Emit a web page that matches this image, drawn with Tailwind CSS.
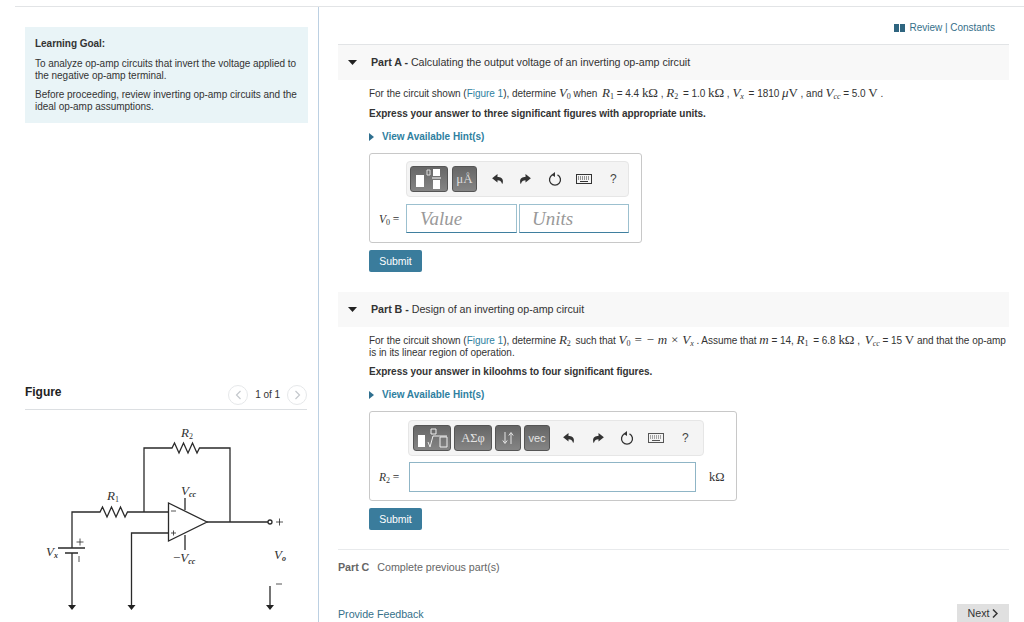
<!DOCTYPE html>
<html lang="en">
<head>
    <meta charset="UTF-8">
    <title>Part A - Inverting op-amp circuit</title>
    <script src="https://cdn.jsdelivr.net/npm/@tailwindcss/browser@4"></script>
</head>
<body class="bg-white h-[622px] overflow-hidden font-['Liberation_Sans',sans-serif] text-[10px] tracking-[-0.03px] leading-[12px] text-[#333]">
    <div class="h-[7px] ml-[15px] border-b border-[#e2e4e6]"></div>
    <div class="flex h-[615px]">
        <!-- left column -->
        <div class="w-[319px] shrink-0 border-r border-[#bcd0e2] flex flex-col">
            <div class="ml-[25px] mr-[10px] mt-[20px] h-[96px] bg-[#e9f4f7] pl-[10px] pr-[8px] pt-[11px]">
                <p class="font-bold">Learning Goal:</p>
                <p class="mt-[8px]">To analyze op-amp circuits that invert the voltage applied to the negative op-amp terminal.</p>
                <p class="mt-[7px]">Before proceeding, review inverting op-amp circuits and the ideal op-amp assumptions.</p>
            </div>
            <div class="ml-[25px] mr-[11px] mt-[260px] h-[27px] border-b border-[#dcdfe2] flex items-start justify-between">
                <span class="font-bold text-[12px] leading-[16px] mt-[1px] text-[#222]">Figure</span>
                <div class="flex items-center gap-[7px] mt-[2px]">
                    <span class="w-[20px] h-[20px] rounded-full border border-[#e6e8ea] flex items-center justify-center">
                        <svg width="7" height="10" viewBox="0 0 7 10"><path d="M5.500 1 1.500 5l4 4" fill="none" stroke="#c4c8cc" stroke-width="1.200"/></svg>
                    </span>
                    <span>1 of 1</span>
                    <span class="w-[20px] h-[20px] rounded-full border border-[#e6e8ea] flex items-center justify-center">
                        <svg width="7" height="10" viewBox="0 0 7 10"><path d="M1.500 1l4 4-4 4" fill="none" stroke="#c4c8cc" stroke-width="1.200"/></svg>
                    </span>
                </div>
            </div>
            <svg class="block" width="318" height="212" viewBox="0 410 318 212" fill="none" stroke="#2a2a2a" stroke-width="1.300">
                <path d="M144 512V448H172l2.500 -5 4.500 10 4.500 -10 4.500 10 4.500 -10 4.500 10 2.500 -5H230V522"/>
                <path d="M72 548V512H100l2.500 -5 4.500 10 4.500 -10 4.500 10 4.500 -10 4.500 10 2.500 -5H168.500"/>
                <path d="M168.500 503V541L207 522Z"/>
                <path d="M207 522H268"/>
                <circle cx="270" cy="522" r="2"/>
                <path d="M185 498V510M185 535V550"/>
                <path d="M168.500 533H131.500V606"/>
                <path d="M58 548H85M65 553H78M72 553V606"/>
                <path d="M270 586V606"/>
                <path d="M68 605H76L72 610ZM127.500 605H135.500L131.500 610ZM266 605H274L270 610Z" fill="#222" stroke="none"/>
                <path d="M276 522H283M279.500 518.500V525.500M76.500 542H83.500M80 538.500V545.500M276 584H282M171 511H176M171 533H176M173.500 530.500V535.500M79 556V562" stroke-width="0.800"/>
                <g font-family="'Liberation Serif',serif" font-style="italic" font-size="13" fill="#333" stroke="none">
                    <text x="181" y="437">R<tspan font-size="8" font-style="normal" dy="2">2</tspan></text>
                    <text x="107" y="500">R<tspan font-size="8" font-style="normal" dy="2">1</tspan></text>
                    <text x="181" y="495">V<tspan font-size="8" font-weight="bold" dy="2">cc</tspan></text>
                    <text x="173" y="562"><tspan font-style="normal">−</tspan>V<tspan font-size="8" font-weight="bold" dy="2">cc</tspan></text>
                    <text x="46" y="556">V<tspan font-size="8" font-weight="bold" dy="2">x</tspan></text>
                    <text x="274" y="559">V<tspan font-size="8" font-weight="bold" dy="2">o</tspan></text>
                </g>
            </svg>
        </div>

        <!-- right column -->
        <div class="flex-1 relative pl-[19px] pr-[15px]">
            <div class="h-[38px] border-b border-[#e2e4e6] flex justify-end items-start pt-[15px] pr-[14px] text-[#35708a]">
                <svg class="mt-[2px] mr-[5px]" width="11" height="8" viewBox="0 0 11 8"><path d="M0 0H5V8H0ZM6 0H11V8H6Z" fill="#2f6580"/></svg>
                <span>Review | Constants</span>
            </div>

            <!-- Part A -->
            <div class="h-[35px] bg-[#f8f8f8] flex items-center pb-[1px] text-[10.700px]">
                <svg class="ml-[10px] mr-[14px]" width="9" height="5" viewBox="0 0 9 5"><path d="M0 0H9L4.500 5Z" fill="#222"/></svg>
                <span><b>Part A -</b> Calculating the output voltage of an inverting op-amp circuit</span>
            </div>
            <div class="ml-[31px]">
                <p class="mt-[7px]">For the circuit shown (<span class="text-[#2f7f9f]">Figure 1</span>), determine <i class="font-['Liberation_Serif',serif] text-[13px]">V<sub class="not-italic text-[8px]">0</sub></i> when <i class="ml-[2px] font-['Liberation_Serif',serif] text-[13px]">R<sub class="not-italic text-[8px]">1</sub></i> = 4.4 <span class="font-['Liberation_Serif',serif] text-[13px]">kΩ</span> , <i class="mr-[2px] font-['Liberation_Serif',serif] text-[13px]">R<sub class="not-italic text-[8px]">2</sub></i> = 1.0 <span class="font-['Liberation_Serif',serif] text-[13px]">kΩ</span> , <i class="mr-[2px] font-['Liberation_Serif',serif] text-[13px]">V<sub class="text-[8px]">x</sub></i> = 1810 <i class="font-['Liberation_Serif',serif] text-[13px]">μ</i><span class="font-['Liberation_Serif',serif] text-[13px]">V</span> , and <i class="font-['Liberation_Serif',serif] text-[13px]">V<sub class="text-[8px]">cc</sub></i> = 5.0 <span class="font-['Liberation_Serif',serif] text-[13px]">V</span> .</p>
                <p class="mt-[8px] font-bold">Express your answer to three significant figures with appropriate units.</p>
                <p class="mt-[11px] font-bold text-[#2f7f9f] flex items-center">
                    <svg class="mr-[8px]" width="5" height="8" viewBox="0 0 5 8"><path d="M0 0 5 4 0 8Z" fill="#2f6f8f"/></svg>View Available Hint(s)
                </p>

                <div class="mt-[10px] w-[273px] h-[90px] border border-[#c8c8c8] rounded-[3px] pl-[36px] pt-[7px]">
                    <div class="w-[223px] h-[36px] bg-[#f4f4f4] border border-[#e6e6e6] rounded-[4px] flex items-center pl-[3px]">
                        <span class="w-[38px] h-[26px] rounded-[3px] bg-linear-to-b from-[#666] to-[#858585] border border-[#555] flex items-center justify-center">
                            <svg width="30" height="20" viewBox="0 0 30 20"><path d="M2 6H10V18H2ZM19 0H26V7H19ZM19 11H26V20H19Z" fill="#fff"/><path d="M13 1H16V6H13Z" fill="none" stroke="#ddd"/><path d="M18 9H27" stroke="#fff"/></svg>
                        </span>
                        <span class="ml-[4px] w-[25px] h-[26px] rounded-[3px] bg-linear-to-b from-[#666] to-[#858585] border border-[#555] flex items-center justify-center font-['Liberation_Serif',serif] text-[13px] text-[#ddd]">μÅ</span>
                        <svg class="ml-[15px]" width="11" height="10" viewBox="0 0 14 13"><path d="M7 0 0 5.500 7 11V8c3 0 5 1 6 5 1-1 1-2 1-4 0-3-3-5-7-5z" fill="#333"/></svg>
                        <svg class="ml-[17px]" width="11" height="10" viewBox="0 0 14 13"><path d="M7 0 14 5.500 7 11V8c-3 0-5 1-6 5-1-1-1-2-1-4 0-3 3-5 7-5z" fill="#333"/></svg>
                        <svg class="ml-[17px]" width="14" height="14" viewBox="0 0 14 14"><path d="M4.500 2.800A5.500 5.500 0 1 0 9.500 2.800" fill="none" stroke="#333" stroke-width="1.300"/><path d="M7 0 3.500 2.700 7 5Z" fill="#333"/></svg>
                        <svg class="ml-[14px]" width="16" height="10" viewBox="0 0 16 10"><rect x="0.500" y="0.500" width="15" height="9" fill="none" stroke="#333"/><path d="M2 3H14M2 5H14" stroke="#333" stroke-dasharray="1 1"/><path d="M4 7.500H12" stroke="#333"/></svg>
                        <span class="ml-[18px] text-[12px] text-[#444]">?</span>
                    </div>
                    <div class="flex items-center mt-[7px] -ml-[27px]">
                        <span class="w-[27px] text-[11.500px] font-['Liberation_Serif',serif]"><i>V</i><sub class="text-[8px]">0</sub> =</span>
                        <span class="w-[111px] h-[29px] border border-[#9cc0cf] border-b-[#3f7f9f] flex items-center pl-[13px] font-['Liberation_Serif',serif] italic text-[19px] text-[#999]">Value</span>
                        <span class="ml-[2px] w-[110px] h-[29px] border border-[#9cc0cf] border-b-[#3f7f9f] flex items-center pl-[12px] font-['Liberation_Serif',serif] italic text-[19px] text-[#999]">Units</span>
                    </div>
                </div>
                <div class="mt-[7px] w-[53px] h-[22px] bg-[#3a7c9c] rounded-[2px] text-[10.500px] text-white flex items-center justify-center">Submit</div>
            </div>

            <!-- Part B -->
            <div class="mt-[20px] h-[35px] bg-[#f8f8f8] flex items-center pb-[1px] text-[10.700px]">
                <svg class="ml-[10px] mr-[14px]" width="9" height="5" viewBox="0 0 9 5"><path d="M0 0H9L4.500 5Z" fill="#222"/></svg>
                <span><b>Part B -</b> Design of an inverting op-amp circuit</span>
            </div>
            <div class="ml-[31px]">
                <p class="mt-[7px]">For the circuit shown (<span class="text-[#2f7f9f]">Figure 1</span>), determine <i class="font-['Liberation_Serif',serif] text-[13px]">R<sub class="not-italic text-[8px]">2</sub></i> <span class="ml-[2px]">such that</span> <i class="font-['Liberation_Serif',serif] text-[13px]">V<sub class="not-italic text-[8px]">0</sub> = − m × V<sub class="text-[8px]">x</sub></i> . Assume that <i class="font-['Liberation_Serif',serif] text-[13px]">m</i> = 14, <i class="mr-[2px] font-['Liberation_Serif',serif] text-[13px]">R<sub class="not-italic text-[8px]">1</sub></i> = 6.8 <span class="font-['Liberation_Serif',serif] text-[13px]">kΩ</span> , <i class="ml-[2px] font-['Liberation_Serif',serif] text-[13px]">V<sub class="text-[8px]">cc</sub></i> = 15 <span class="font-['Liberation_Serif',serif] text-[13px]">V</span> and that the op-amp is in its linear region of operation.</p>
                <p class="mt-[7px] font-bold">Express your answer in kiloohms to four significant figures.</p>
                <p class="mt-[11px] font-bold text-[#2f7f9f] flex items-center">
                    <svg class="mr-[8px]" width="5" height="8" viewBox="0 0 5 8"><path d="M0 0 5 4 0 8Z" fill="#2f6f8f"/></svg>View Available Hint(s)
                </p>

                <div class="mt-[10px] w-[368px] h-[90px] border border-[#c8c8c8] rounded-[3px] pl-[38px] pt-[8px]">
                    <div class="w-[296px] h-[36px] bg-[#f4f4f4] border border-[#e6e6e6] rounded-[4px] flex items-center pl-[4px]">
                        <span class="w-[38px] h-[26px] rounded-[3px] bg-linear-to-b from-[#666] to-[#858585] border border-[#555] flex items-center justify-center">
                            <svg width="32" height="20" viewBox="0 0 32 20"><path d="M2 7H9V19H2Z" fill="#fff"/><path d="M15 1H20V6H15ZM24 9H31V19H24Z" fill="none" stroke="#eee"/><path d="M12 14l2 5 3-11H31" fill="none" stroke="#eee"/></svg>
                        </span>
                        <span class="ml-[3px] w-[38px] h-[26px] rounded-[3px] bg-linear-to-b from-[#666] to-[#858585] border border-[#555] flex items-center justify-center font-['Liberation_Serif',serif] text-[12.500px] text-[#e4e4e4]">ΑΣφ</span>
                        <span class="ml-[3px] w-[26px] h-[26px] rounded-[3px] bg-linear-to-b from-[#666] to-[#858585] border border-[#555] flex items-center justify-center">
                            <svg width="12" height="12" viewBox="0 0 12 12"><path d="M3 0V11M0.800 8.500 3 11.500 5.200 8.500M9 12V1M6.800 3.500 9 0.500 11.200 3.500" fill="none" stroke="#e4e4e4"/></svg>
                        </span>
                        <span class="ml-[3px] w-[26px] h-[26px] rounded-[3px] bg-linear-to-b from-[#666] to-[#858585] border border-[#555] flex items-center justify-center text-[11px] text-[#e4e4e4]">vec</span>
                        <svg class="ml-[13px]" width="11" height="10" viewBox="0 0 14 13"><path d="M7 0 0 5.500 7 11V8c3 0 5 1 6 5 1-1 1-2 1-4 0-3-3-5-7-5z" fill="#333"/></svg>
                        <svg class="ml-[19px]" width="11" height="10" viewBox="0 0 14 13"><path d="M7 0 14 5.500 7 11V8c-3 0-5 1-6 5-1-1-1-2-1-4 0-3 3-5 7-5z" fill="#333"/></svg>
                        <svg class="ml-[16px]" width="14" height="14" viewBox="0 0 14 14"><path d="M4.500 2.800A5.500 5.500 0 1 0 9.500 2.800" fill="none" stroke="#333" stroke-width="1.300"/><path d="M7 0 3.500 2.700 7 5Z" fill="#333"/></svg>
                        <svg class="ml-[14px]" width="16" height="10" viewBox="0 0 16 10"><rect x="0.500" y="0.500" width="15" height="9" fill="none" stroke="#555"/><path d="M2 3H14M2 5H14" stroke="#555" stroke-dasharray="1 1"/><path d="M4 7.500H12" stroke="#555"/></svg>
                        <span class="ml-[18px] text-[12px] text-[#444]">?</span>
                    </div>
                    <div class="flex items-center mt-[6px] -ml-[29px]">
                        <span class="w-[30px] text-[11.500px] font-['Liberation_Serif',serif]"><i>R</i><sub class="text-[8px]">2</sub> =</span>
                        <span class="w-[287px] h-[30px] border border-[#8fb5c6]"></span>
                        <span class="ml-[13px] font-['Liberation_Serif',serif] text-[12.500px]">kΩ</span>
                    </div>
                </div>
                <div class="mt-[7px] w-[53px] h-[22px] bg-[#3a7c9c] rounded-[2px] text-[10.500px] text-white flex items-center justify-center">Submit</div>
            </div>

            <!-- Part C -->
            <div class="mt-[19px] border-t border-[#e8eaec] pt-[11px] text-[10.700px] text-[#666]">
                <b>Part C</b><span class="ml-[8px]">Complete previous part(s)</span>
            </div>

            <div class="mt-[31px] flex justify-between items-start text-[10.700px]">
                <span class="mt-[4px] text-[#35708a]">Provide Feedback</span>
                <span class="w-[52px] h-[18px] bg-[#e0e0e0] flex items-center justify-center gap-[3px]">Next
                    <svg width="6" height="9" viewBox="0 0 6 9"><path d="M1 0.500 5 4.500 1 8.500" fill="none" stroke="#333" stroke-width="1.500"/></svg>
                </span>
            </div>
        </div>
    </div>
</body>
</html>
